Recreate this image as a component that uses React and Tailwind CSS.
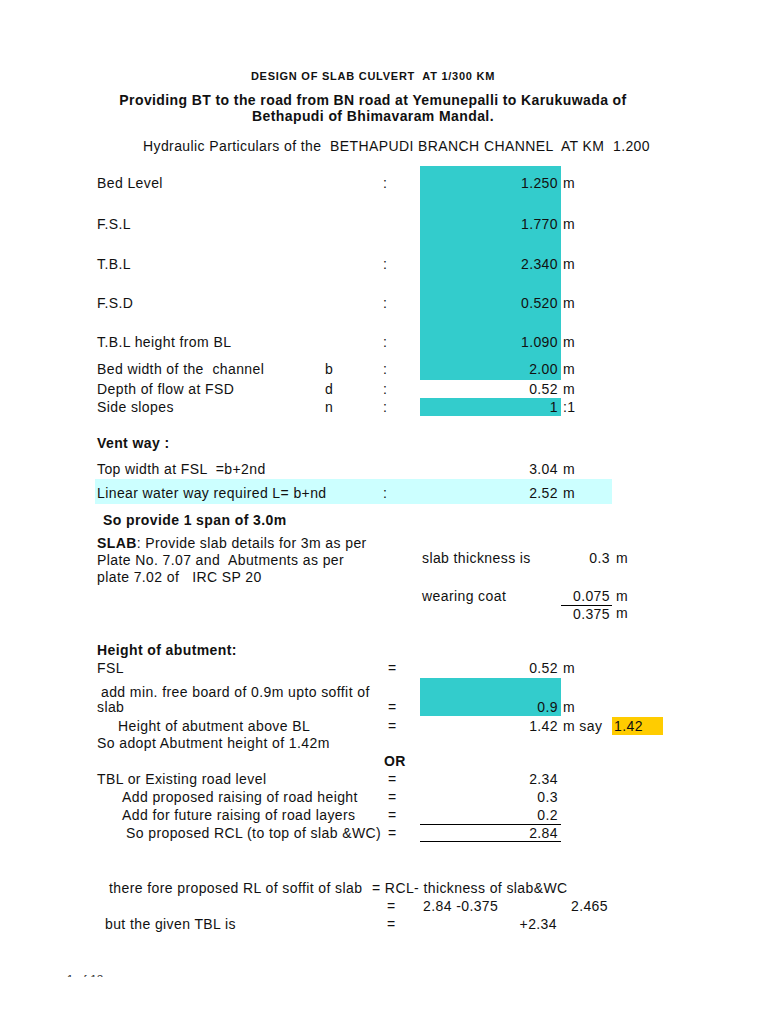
import React from "react";

const grid = "grid grid-cols-[225px_60px_40px_141px_51px_51px]";

// one spreadsheet row: label | symbol | separator | value | unit | extra
function Row({ h, label, sym, sep, value, unit, extra, labelCls = "", valueCls = "", sepCls = "pl-[3px]", extraCls = "", rowCls = "" }) {
    return (
        <div className={`${grid} items-end leading-[18px] ${h} ${rowCls}`}>
            <div className={`pl-[2px] whitespace-pre ${labelCls}`}>{label}</div>
            <div className="pl-[5px]">{sym}</div>
            <div className={sepCls}>{sep}</div>
            <div className={`self-stretch flex items-end justify-end pr-[3px] ${valueCls}`}>{value}</div>
            <div className="pl-[2px] whitespace-pre">{unit}</div>
            <div className={`self-stretch flex items-end ${extraCls}`}>{extra}</div>
        </div>
    );
}

export default function App() {
    return (
        <div className="w-[768px] h-[1024px] bg-white text-[#111] text-[14px] tracking-[0.4px] font-['Liberation_Sans',Arial,sans-serif] overflow-hidden">
            {/* Header */}
            <div className="w-[746px] text-center pt-[69px]">
                <div className="text-[11px] leading-[14px] font-bold tracking-[0.75px] whitespace-pre">DESIGN OF SLAB CULVERT  AT 1/300 KM</div>
                <div className="mt-[9px] text-[14px] leading-[16px] font-bold">
                    <div>Providing BT to the road from BN road at Yemunepalli to Karukuwada of</div>
                    <div>Bethapudi of Bhimavaram Mandal.</div>
                </div>
            </div>
            <div className="mt-[13px] pl-[143px] leading-[18px] whitespace-pre">
                Hydraulic Particulars of the  BETHAPUDI BRANCH CHANNEL  AT KM  1.200
            </div>

            <div className="ml-[95px] mt-[11px]">
                {/* Hydraulic particulars */}
                <Row h="h-[27px]" rowCls="pb-[1px]" label="Bed Level" sep=":" value="1.250" unit="m" valueCls="bg-[#33cccc] -mb-[1px] pb-[1px]" />
                <Row h="h-[40px]" label="F.S.L" value="1.770" unit="m" valueCls="bg-[#33cccc]" />
                <Row h="h-[40px]" label="T.B.L" sep=":" value="2.340" unit="m" valueCls="bg-[#33cccc]" />
                <Row h="h-[39px]" label="F.S.D" sep=":" value="0.520" unit="m" valueCls="bg-[#33cccc]" />
                <Row h="h-[39px]" label="T.B.L height from BL" sep=":" value="1.090" unit="m" valueCls="bg-[#33cccc]" />
                <Row h="h-[29px]" rowCls="pb-[2px]" label="Bed width of the  channel" sym="b" sep=":" value="2.00" unit="m" valueCls="bg-[#33cccc] -mb-[2px] pb-[2px]" />
                <Row h="h-[18px]" label="Depth of flow at FSD" sym="d" sep=":" value="0.52" unit="m" />
                <Row h="h-[18px]" label="Side slopes" sym="n" sep=":" value="1" unit=":1" valueCls="bg-[#33cccc]" />

                {/* Vent way */}
                <div className="mt-[18px] pl-[2px] leading-[18px] font-bold">Vent way :</div>
                <Row h="h-[18px]" rowCls="mt-[8px]" label="Top width at FSL  =b+2nd" value="3.04" unit="m" />
                <div className={`${grid} items-end leading-[18px] h-[25px] mt-[1px] pb-[2px]`}>
                    <div className="col-span-5 bg-[#ccffff] -mb-[2px] pb-[2px] h-[25px] flex items-end">
                        <div className="w-[225px] pl-[2px] whitespace-pre">Linear water way required L= b+nd</div>
                        <div className="w-[60px]" />
                        <div className="w-[40px] pl-[3px]">:</div>
                        <div className="w-[141px] text-right pr-[3px]">2.52</div>
                        <div className="w-[51px] pl-[2px]">m</div>
                    </div>
                </div>
                <div className="mt-[7px] pl-[8px] leading-[18px] font-bold">So provide 1 span of 3.0m</div>

                {/* Slab */}
                <div className="flex mt-[6px]">
                    <div className="w-[325px] pl-[2px] leading-[17px] whitespace-pre">
                        <div><span className="font-bold">SLAB</span>: Provide slab details for 3m as per</div>
                        <div>Plate No. 7.07 and  Abutments as per</div>
                        <div>plate 7.02 of   IRC SP 20</div>
                    </div>
                    <div className="leading-[18px]">
                        <div className="grid grid-cols-[141px_51px_51px] mt-[14px]">
                            <div className="pl-[2px]">slab thickness is</div>
                            <div className="text-right pr-[2px]">0.3</div>
                            <div className="pl-[4px]">m</div>
                        </div>
                        <div className="grid grid-cols-[141px_51px_51px] mt-[20px]">
                            <div className="pl-[2px]">wearing coat</div>
                            <div className="text-right pr-[2px]">0.075</div>
                            <div className="pl-[4px]">m</div>
                        </div>
                        <div className="grid grid-cols-[141px_51px_51px] leading-[16px]">
                            <div />
                            <div className="text-right pr-[2px] border-t border-black">0.375</div>
                            <div className="pl-[4px]">m</div>
                        </div>
                    </div>
                </div>

                {/* Height of abutment */}
                <div className="mt-[19px] pl-[2px] leading-[18px] font-bold">Height of abutment:</div>
                <Row h="h-[18px]" label="FSL" sep="=" sepCls="pl-[8px]" value="0.52" unit="m" />
                <div className={`${grid} items-end h-[38px] mt-[1px] leading-[15px] pb-[1px]`}>
                    <div className="whitespace-pre pl-[2px]">
                        <div className="pl-[4px]">add min. free board of 0.9m upto soffit of</div>
                        <div>slab</div>
                    </div>
                    <div />
                    <div className="pl-[8px]">=</div>
                    <div className="self-stretch -mb-[1px] pb-[1px] bg-[#33cccc] flex items-end justify-end pr-[3px]">0.9</div>
                    <div className="pl-[2px]">m</div>
                    <div />
                </div>
                <Row
                    h="h-[18px]"
                    label="Height of abutment above BL"
                    labelCls="pl-[23px]"
                    sep="="
                    sepCls="pl-[8px]"
                    value="1.42"
                    unit="m say"
                    extra="1.42"
                    extraCls="bg-[#ffcc00] pl-[2px] mt-[1px]"
                />
                <Row h="h-[18px]" label="So adopt Abutment height of 1.42m" />
                <Row h="h-[18px]" sep="OR" sepCls="pl-[4px] font-bold" />
                <Row h="h-[18px]" label="TBL or Existing road level" sep="=" sepCls="pl-[8px]" value="2.34" />
                <Row h="h-[18px]" label="Add proposed raising of road height" labelCls="pl-[27px]" sep="=" sepCls="pl-[8px]" value="0.3" />
                <Row h="h-[18px]" label="Add for future raising of road layers" labelCls="pl-[27px]" sep="=" sepCls="pl-[8px]" value="0.2" />
                <Row
                    h="h-[18px]"
                    label="So proposed RCL (to top of slab &WC)"
                    labelCls="pl-[31px]"
                    sep="="
                    sepCls="pl-[8px]"
                    value="2.84"
                    valueCls="border-t border-b border-black leading-[16px]"
                />

                {/* Soffit */}
                <div className={`${grid} leading-[18px] mt-[37px]`}>
                    <div className="pl-[14px] whitespace-pre">there fore proposed RL of soffit of slab</div>
                    <div className="col-span-4 pl-[52px] whitespace-pre">= RCL- thickness of slab&WC</div>
                </div>
                <div className={`${grid} leading-[18px]`}>
                    <div />
                    <div />
                    <div className="pl-[7px]">=</div>
                    <div className="pl-[3px]">2.84 -0.375</div>
                    <div className="text-right pr-[4px]">2.465</div>
                    <div />
                </div>
                <div className={`${grid} leading-[18px]`}>
                    <div className="pl-[10px] whitespace-pre">but the given TBL is</div>
                    <div />
                    <div className="pl-[7px]">=</div>
                    <div className="text-right pr-[4px]">+2.34</div>
                    <div />
                    <div />
                </div>
            </div>

            {/* page number, clipped at the page edge as in the source */}
            <div className="mt-[39px] ml-[67px] h-[5px] overflow-hidden text-[11px] leading-[14px] text-[#333]">1 of 13</div>
        </div>
    );
}
